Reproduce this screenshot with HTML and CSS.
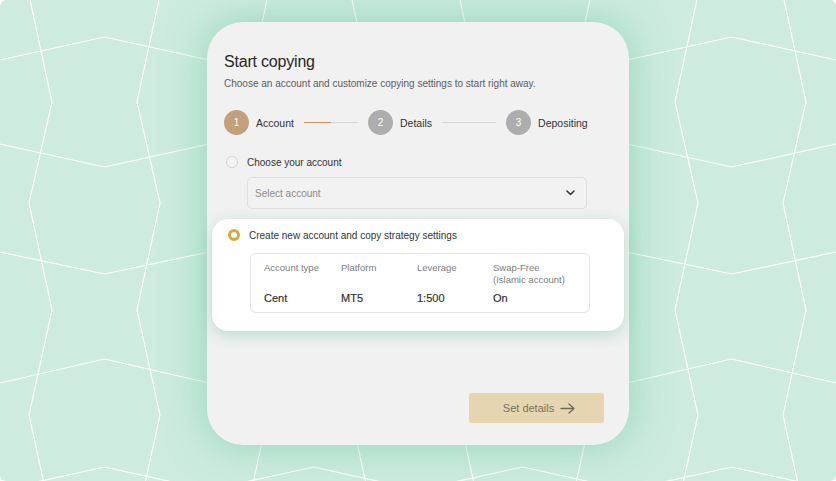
FILE: index.html
```html
<!DOCTYPE html>
<html lang="en">
<head>
<meta charset="utf-8">
<title>Start copying</title>
<link rel="stylesheet" href="styles.css">
</head>
<body>
<div class="frame">
  <svg class="pattern" width="836" height="481" viewBox="0 0 836 481" fill="none" stroke="#ffffff" stroke-width="1.2" stroke-linejoin="miter">
    <polyline points="0,60 104.5,37 209,60 313.5,37 418,60 522.5,37 627,60 731.5,37 836,60"/>
    <polyline points="0,144 104.5,167 209,144 313.5,167 418,144 522.5,167 627,144 731.5,167 836,144"/>
    <polyline points="0,252 104.5,274 209,252 313.5,274 418,252 522.5,274 627,252 731.5,274 836,252"/>
    <polyline points="0,383 104.5,359 209,383 313.5,359 418,383 522.5,359 627,383 731.5,359 836,383"/>
    <polyline points="0,490 104.5,467 209,490 313.5,467 418,490 522.5,467 627,490 731.5,467 836,490"/>
    <polyline points="29,-5 52,102 29,203 52,310 29,415 52,520"/>
    <polyline points="351,-5 374,102 351,203 374,310 351,415 374,520"/>
    <polyline points="459,-5 482,102 459,203 482,310 459,415 482,520"/>
    <polyline points="783,-5 806,102 783,203 806,310 783,415 806,520"/>
    <polyline points="160,-5 137,102 160,203 137,310 160,415 137,520"/>
    <polyline points="268,-5 245,102 268,203 245,310 268,415 245,520"/>
    <polyline points="591,-5 568,102 591,203 568,310 591,415 568,520"/>
    <polyline points="698,-5 675,102 698,203 675,310 698,415 675,520"/>
  </svg>

  <div class="card">
    <h1 class="title">Start copying</h1>
    <p class="subtitle">Choose an account and customize copying settings to start right away.</p>

    <div class="stepper">
      <div class="step active"><span class="num">1</span><span class="step-label">Account</span></div>
      <div class="connector"><span class="progress"></span></div>
      <div class="step"><span class="num">2</span><span class="step-label">Details</span></div>
      <div class="connector"></div>
      <div class="step"><span class="num">3</span><span class="step-label">Depositing</span></div>
    </div>

    <div class="option">
      <span class="radio"></span>
      <span class="option-label">Choose your account</span>
    </div>
    <div class="select">
      <span>Select account</span>
      <svg class="chevron" width="9" height="6" viewBox="0 0 9 6" fill="none" stroke="#3a3a3a" stroke-width="1.6" stroke-linecap="round" stroke-linejoin="round"><path d="M1 1l3.5 3.5L8 1"/></svg>
    </div>

    <div class="new-account">
      <div class="option">
        <span class="radio checked"></span>
        <span class="option-label">Create new account and copy strategy settings</span>
      </div>
      <div class="specs">
        <span class="spec-label">Account type</span>
        <span class="spec-label">Platform</span>
        <span class="spec-label">Leverage</span>
        <span class="spec-label">Swap-Free<br>(Islamic account)</span>
        <span class="spec-value">Cent</span>
        <span class="spec-value">MT5</span>
        <span class="spec-value">1:500</span>
        <span class="spec-value">On</span>
      </div>
    </div>

    <button class="cta">
      <span>Set details</span>
      <svg width="15" height="11" viewBox="0 0 15 11" fill="none" stroke="#6f6a5c" stroke-width="1.3" stroke-linecap="round" stroke-linejoin="round"><path d="M1 5.5h13M9 1l5 4.5L9 10"/></svg>
    </button>
  </div>
</div>
</body>
</html>
```
FILE: styles.css
```css
* { box-sizing: border-box; }

body {
  margin: 0;
  background: #ffffff;
}

.frame {
  position: relative;
  width: 836px;
  height: 481px;
  overflow: hidden;
  border-radius: 6px;
  background: #cdebdf;
  display: flex;
  justify-content: center;
  align-items: flex-start;
  padding-top: 22px;
  font-family: "Liberation Sans", Arial, sans-serif;
}

.pattern {
  position: absolute;
  left: 0;
  top: 0;
  opacity: 0.95;
}

.card {
  position: relative;
  width: 422px;
  height: 423px;
  background: #f1f1f1;
  border-radius: 36px;
  padding: 30px 25px 22px 17px;
  display: flex;
  flex-direction: column;
  box-shadow: 0 0 40px rgba(110, 196, 160, 0.6);
}

.title {
  margin: 0;
  font-size: 16px;
  line-height: 20px;
  font-weight: 400;
  color: #262626;
  letter-spacing: -0.2px;
}

.subtitle {
  margin: 4px 0 0;
  font-size: 10px;
  line-height: 16px;
  color: #5c5c5c;
}

.stepper {
  margin-top: 18px;
  display: flex;
  align-items: center;
  height: 25px;
}

.step {
  display: flex;
  align-items: center;
}

.num {
  width: 25px;
  height: 25px;
  border-radius: 50%;
  background: #adadad;
  color: #ffffff;
  font-size: 10px;
  display: flex;
  align-items: center;
  justify-content: center;
}

.active .num {
  background: #c3a07c;
}

.step-label {
  margin-left: 7px;
  font-size: 10.5px;
  color: #333333;
}

.connector {
  position: relative;
  width: 54px;
  height: 1px;
  margin: 0 10px;
  background: #d6d6d6;
}

.progress {
  position: absolute;
  left: 0;
  top: -0.5px;
  width: 27px;
  height: 1.5px;
  background: #cc935a;
}

.option {
  display: flex;
  align-items: center;
  gap: 9px;
  height: 14px;
  margin-top: 20px;
  padding-left: 2px;
  font-size: 10px;
  color: #333333;
}

.radio {
  width: 12px;
  height: 12px;
  border-radius: 50%;
  border: 1px solid #d0d0d0;
  background: #f4f4f4;
  flex: none;
}

.radio.checked {
  border: 3.5px solid #d5a93e;
  background: #ffffff;
}

.select {
  margin: 8px 17px 0 23px;
  height: 32px;
  border: 1px solid #dedede;
  border-radius: 5px;
  background: #f2f2f2;
  display: flex;
  align-items: center;
  justify-content: space-between;
  padding: 0 11px 0 7px;
  font-size: 10px;
  color: #8b8b8b;
}

.new-account {
  margin: 10px -20px 0 -12px;
  background: #ffffff;
  border-radius: 16px;
  padding: 9px 34px 18px 14px;
  box-shadow: 0 4px 16px rgba(100, 190, 150, 0.4);
}

.new-account .option {
  margin-top: 0;
}

.specs {
  margin: 11px 0 0 24px;
  height: 60px;
  border: 1px solid #e6e6e6;
  border-radius: 6px;
  padding: 8px 13px 0;
  display: grid;
  grid-template-columns: 77px 76px 76px 1fr;
  align-items: start;
}

.spec-label {
  font-size: 9.5px;
  line-height: 12px;
  color: #7b7b7b;
}

.spec-value {
  margin-top: -2px;
  font-size: 11px;
  line-height: 16px;
  color: #2d2d2d;
  -webkit-text-stroke: 0.15px #2d2d2d;
}

.cta {
  margin-top: auto;
  align-self: flex-end;
  width: 135px;
  height: 30px;
  border: none;
  border-radius: 3px;
  background: #e6d6b0;
  color: #77725f;
  font-family: inherit;
  font-size: 11px;
  display: flex;
  align-items: center;
  justify-content: center;
  gap: 6px;
  padding: 0 0 0 5px;
}
```
